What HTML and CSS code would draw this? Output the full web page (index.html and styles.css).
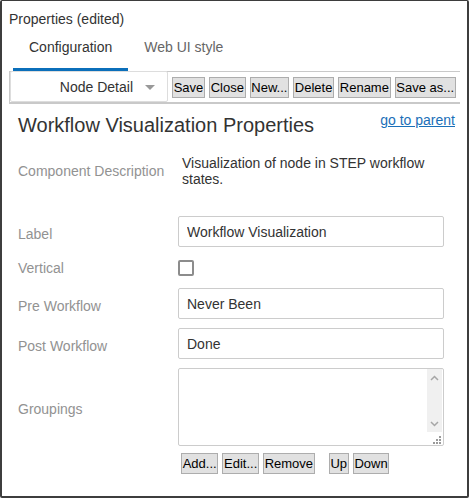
FILE: index.html
```html
<!DOCTYPE html>
<html>
<head>
<meta charset="utf-8">
<link rel="stylesheet" href="styles.css">
</head>
<body>
<div class="panel">
  <div class="header">Properties (edited)</div>
  <div class="tabs">
    <div class="tab active">Configuration</div>
    <div class="tab">Web UI style</div>
  </div>
  <div class="toolbar">
    <div class="dropdown"><span>Node Detail</span><span class="caret"></span></div>
    <button class="btn">Save</button>
    <button class="btn">Close</button>
    <button class="btn">New...</button>
    <button class="btn">Delete</button>
    <button class="btn">Rename</button>
    <button class="btn">Save as...</button>
  </div>
  <div class="title-row">
    <div class="title">Workflow Visualization Properties</div>
    <a class="parent-link" href="#">go to parent</a>
  </div>
  <div class="form">
    <div class="row row-desc">
      <div class="label">Component Description</div>
      <div class="desc">Visualization of node in STEP workflow states.</div>
    </div>
    <div class="row row-label">
      <div class="label shifted">Label</div>
      <input class="field" type="text" value="Workflow Visualization">
    </div>
    <div class="row row-check">
      <div class="label">Vertical</div>
      <span class="checkbox"></span>
    </div>
    <div class="row row-pre">
      <div class="label shifted">Pre Workflow</div>
      <input class="field" type="text" value="Never Been">
    </div>
    <div class="row row-post">
      <div class="label shifted">Post Workflow</div>
      <input class="field" type="text" value="Done">
    </div>
    <div class="row row-group">
      <div class="label shifted">Groupings</div>
      <div class="list">
        <div class="list-body"></div>
        <div class="scrollbar">
          <div class="track">
            <svg class="arrow" width="9" height="6" viewBox="0 0 9 6"><polyline points="1,5 4.5,1.5 8,5" fill="none" stroke="#a6a6a6" stroke-width="1.5"/></svg>
            <svg class="arrow" width="9" height="6" viewBox="0 0 9 6"><polyline points="1,1 4.5,4.5 8,1" fill="none" stroke="#a6a6a6" stroke-width="1.5"/></svg>
          </div>
          <div class="grip">
            <svg width="9" height="9" viewBox="0 0 9 9"><g fill="#9a9a9a"><rect x="7" y="1" width="2" height="2"/><rect x="4" y="4" width="2" height="2"/><rect x="7" y="4" width="2" height="2"/><rect x="1" y="7" width="2" height="2"/><rect x="4" y="7" width="2" height="2"/><rect x="7" y="7" width="2" height="2"/></g></svg>
          </div>
        </div>
      </div>
    </div>
    <div class="list-buttons">
      <button class="btn">Add...</button>
      <button class="btn">Edit...</button>
      <button class="btn">Remove</button>
      <button class="btn btn-sep">Up</button>
      <button class="btn">Down</button>
    </div>
  </div>
</div>
</body>
</html>
```
FILE: styles.css
```css
html, body {
  margin: 0;
  padding: 0;
  background: #ffffff;
}

.panel {
  width: 469px;
  height: 498px;
  box-sizing: border-box;
  border: 2px solid #3d3d3d;
  border-top-width: 1px;
  border-radius: 2px;
  padding: 0 7px;
  font-family: "Liberation Sans", Arial, sans-serif;
  font-size: 14px;
  color: #333333;
  background: #ffffff;
}

.header {
  padding-top: 9px;
  line-height: 18px;
  color: #333333;
}

.tabs {
  display: flex;
  margin-left: 4px;
}

.tab {
  padding: 10px 16px 12px;
  line-height: 18px;
  color: #666666;
  border-bottom: 3px solid transparent;
}

.tab.active {
  color: #333333;
  border-bottom-color: #0b6fba;
}

.toolbar {
  display: flex;
  align-items: center;
  gap: 4px;
  height: 30px;
  border-top: 1px solid #c9c9c9;
  border-bottom: 2px solid #c9c9c9;
  border-left: 1px solid #c9c9c9;
}

.dropdown {
  width: 158px;
  height: 31px;
  margin-top: -1px;
  box-sizing: border-box;
  border: 1px solid #dddddd;
  border-radius: 2px;
  display: flex;
  align-items: center;
  justify-content: flex-end;
  padding-right: 12px;
  color: #333333;
  background: #ffffff;
}

.caret {
  width: 0;
  height: 0;
  margin-left: 12px;
  margin-top: 2px;
  border-left: 5px solid transparent;
  border-right: 5px solid transparent;
  border-top: 5px solid #999999;
}

.btn {
  height: 21px;
  margin: 0;
  padding: 0 0.7px;
  border: 1px solid #adadad;
  border-radius: 0;
  background: #e1e1e1;
  font-family: "Liberation Sans", Arial, sans-serif;
  font-size: 13px;
  line-height: 19px;
  color: #000000;
}

.title-row {
  display: flex;
  justify-content: space-between;
  align-items: flex-start;
  margin-top: 9px;
  padding-left: 9px;
  padding-right: 5px;
}

.title {
  font-size: 20px;
  line-height: 24px;
  color: #333333;
}

.parent-link {
  margin-top: -2px;
  line-height: 18px;
  color: #1a6fb8;
  text-decoration: underline;
}

.form {
  padding-left: 9px;
}

.row {
  display: flex;
  align-items: center;
}

.label {
  width: 160px;
  flex: none;
  line-height: 16px;
  color: #929292;
}

.label.shifted {
  padding-top: 4px;
}

.row-desc {
  margin-top: 18px;
}

.desc {
  width: 266px;
  box-sizing: border-box;
  padding-left: 4px;
  line-height: 16px;
  color: #333333;
}

.row-label {
  margin-top: 29px;
}

.row-check {
  margin-top: 5px;
  height: 31px;
}

.row-pre {
  margin-top: 5px;
}

.row-post,
.row-group {
  margin-top: 9px;
}

.field {
  width: 266px;
  height: 31px;
  box-sizing: border-box;
  margin: 0;
  padding: 0 8px;
  border: 1px solid #cccccc;
  border-radius: 2px;
  font-family: "Liberation Sans", Arial, sans-serif;
  font-size: 14px;
  color: #333333;
  background: #ffffff;
}

.checkbox {
  display: block;
  width: 16px;
  height: 16px;
  box-sizing: border-box;
  border: 2px solid #8c8c8c;
  border-radius: 2px;
  background: #ffffff;
}

.list {
  width: 266px;
  height: 78px;
  box-sizing: border-box;
  border: 1px solid #cccccc;
  border-radius: 2px;
  display: flex;
  background: #ffffff;
}

.list-body {
  flex: 1;
}

.scrollbar {
  width: 15px;
  margin-right: 1px;
  display: flex;
  flex-direction: column;
}

.track {
  flex: 1;
  background: #f0f0f0;
  display: flex;
  flex-direction: column;
  align-items: center;
  justify-content: space-between;
  padding: 6px 0 5px;
}

.arrow {
  display: block;
}

.grip {
  height: 12px;
  display: flex;
  justify-content: flex-end;
  align-items: flex-end;
  padding: 0 1px 1px 0;
}

.grip svg {
  display: block;
}

.list-buttons {
  display: flex;
  gap: 4px;
  margin-top: 7px;
  margin-left: 163px;
}

.btn-sep {
  margin-left: 10px;
}
```
